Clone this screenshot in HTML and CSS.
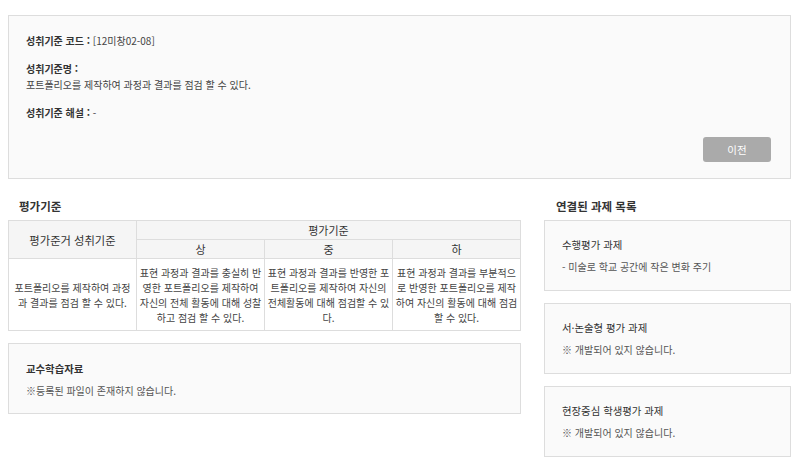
FILE: index.html
```html
<!DOCTYPE html>
<html lang="ko">
<head>
    <meta charset="UTF-8">
    <meta name="viewport" content="width=device-width, initial-scale=1.0">
    <title>성취기준 상세</title>
    <link rel="stylesheet" href="styles.css">
</head>
<body>
<div class="wrap">

    <div class="info-box">
        <p><b>성취기준 코드 :</b> [12미창02-08]</p>
        <p><b>성취기준명 :</b><br>포트폴리오를 제작하여 과정과 결과를 점검 할 수 있다.</p>
        <p><b>성취기준 해설 :</b> -</p>
        <div class="btn-row">
            <button type="button" class="btn-prev">이전</button>
        </div>
    </div>

    <div class="columns">
        <div class="col-left">
            <h4>평가기준</h4>
            <table class="eval">
                <thead>
                    <tr>
                        <th rowspan="2" class="big">평가준거 성취기준</th>
                        <th colspan="3">평가기준</th>
                    </tr>
                    <tr>
                        <th>상</th>
                        <th>중</th>
                        <th>하</th>
                    </tr>
                </thead>
                <tbody>
                    <tr>
                        <td>포트폴리오를 제작하여 과정과 결과를 점검 할 수 있다.</td>
                        <td>표현 과정과 결과를 충실히 반영한 포트폴리오를 제작하여 자신의 전체 활동에 대해 성찰하고 점검 할 수 있다.</td>
                        <td>표현 과정과 결과를 반영한 포트폴리오를 제작하여 자신의 전체활동에 대해 점검할 수 있다.</td>
                        <td>표현 과정과 결과를 부분적으로 반영한 포트폴리오를 제작하여 자신의 활동에 대해 점검할 수 있다.</td>
                    </tr>
                </tbody>
            </table>

            <div class="card">
                <div class="card-title bold">교수학습자료</div>
                <div class="card-text">※등록된 파일이 존재하지 않습니다.</div>
            </div>
        </div>

        <div class="col-right">
            <h4>연결된 과제 목록</h4>
            <div class="card">
                <div class="card-title">수행평가 과제</div>
                <div class="card-text">- 미술로 학교 공간에 작은 변화 주기</div>
            </div>
            <div class="card">
                <div class="card-title">서·논술형 평가 과제</div>
                <div class="card-text">※ 개발되어 있지 않습니다.</div>
            </div>
            <div class="card">
                <div class="card-title">현장중심 학생평가 과제</div>
                <div class="card-text">※ 개발되어 있지 않습니다.</div>
            </div>
        </div>
    </div>

</div>
</body>
</html>
```

FILE: styles.css
```css
body {
    margin: 0;
    font-family: "Noto Sans CJK KR", "Noto Sans", sans-serif;
    font-size: 10px;
    color: #444;
    background-color: #fff;
}
.wrap {
    width: 783px;
    padding: 15px 0 0 8px;
}
.info-box {
    background-color: #fafafa;
    border: 1px solid #ddd;
    padding: 17px 19px 16px 17px;
}
.info-box p {
    margin: 0 0 12px 0;
    line-height: 16px;
}
.info-box p:last-of-type {
    margin-bottom: 0;
}
.info-box b {
    color: #333;
}
.btn-row {
    margin-top: 16px;
    display: flex;
    justify-content: flex-end;
}
.btn-prev {
    width: 68px;
    height: 25px;
    border: none;
    border-radius: 3px;
    background-color: #aaa;
    color: #fff;
    font-family: inherit;
    font-size: 10.5px;
}
.columns {
    display: flex;
    justify-content: space-between;
    margin-top: 19px;
}
.col-left {
    width: 513px;
}
.col-right {
    width: 247px;
}
h4 {
    margin: 0 0 6px 0;
    font-size: 11.5px;
    line-height: 16px;
    color: #333;
}
.col-left h4 {
    padding-left: 11px;
}
.col-right h4 {
    padding-left: 12px;
}
.eval {
    width: 513px;
    border-collapse: collapse;
    table-layout: fixed;
}
.eval th {
    background-color: #f5f5f5;
    border: 1px solid #ddd;
    font-weight: normal;
    font-size: 11px;
    color: #333;
    padding: 0;
    height: 18px;
}
.eval th.big {
    font-size: 11.3px;
}
.eval td {
    border: 1px solid #ddd;
    text-align: center;
    vertical-align: middle;
    line-height: 15px;
    padding: 5px 2px;
    height: 61px;
    color: #444;
}
.card {
    background-color: #fafafa;
    border: 1px solid #ddd;
    padding: 17px 17px 14px 17px;
    margin-top: 12px;
}
.col-right .card {
    padding: 16px 17px 15px 17px;
}
.col-right h4 + .card {
    margin-top: 0;
}
.card-title {
    line-height: 16px;
    color: #333;
    font-size: 10.4px;
}
.card-title.bold {
    font-weight: bold;
}
.card-text {
    margin-top: 6px;
    line-height: 16px;
    color: #555;
}
```
